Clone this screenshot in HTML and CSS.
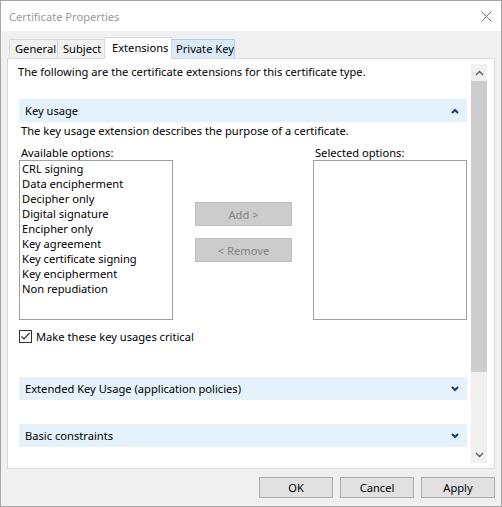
FILE: index.html
```html
<!DOCTYPE html>
<html>
<head>
    <title>Certificate Properties</title>
    <link rel="stylesheet" href="styles.css">
</head>
<body>
<div class="dialog">
    <div class="titlebar">
        <span class="title">Certificate Properties</span>
        <svg class="close" width="11" height="11" viewBox="0 0 11 11">
            <path d="M0.5 0.5 L10.5 10.5 M10.5 0.5 L0.5 10.5" stroke="#7a7a7a" stroke-width="1" fill="none"/>
        </svg>
    </div>

    <div class="tabs">
        <div class="tab tab-general">General</div>
        <div class="tab tab-subject">Subject</div>
        <div class="tab tab-active">Extensions</div>
        <div class="tab tab-hover">Private Key</div>
    </div>

    <div class="panel">
        <div class="content">
            <div class="intro">The following are the certificate extensions for this certificate type.</div>

            <div class="section-head first">
                <span>Key usage</span>
                <svg class="chevron" width="8" height="6" viewBox="0 0 8 6">
                    <polyline points="1,5 4,2 7,5" fill="none" stroke="#1c3a8c" stroke-width="2"/>
                </svg>
            </div>
            <div class="desc">The key usage extension describes the purpose of a certificate.</div>

            <div class="options">
                <div class="option-col">
                    <div class="option-label">Available options:</div>
                    <ul class="listbox">
                        <li>CRL signing</li>
                        <li>Data encipherment</li>
                        <li>Decipher only</li>
                        <li>Digital signature</li>
                        <li>Encipher only</li>
                        <li>Key agreement</li>
                        <li>Key certificate signing</li>
                        <li>Key encipherment</li>
                        <li>Non repudiation</li>
                    </ul>
                </div>
                <div class="move-buttons">
                    <button class="move-btn" disabled>Add &gt;</button>
                    <button class="move-btn" disabled>&lt; Remove</button>
                </div>
                <div class="option-col">
                    <div class="option-label">Selected options:</div>
                    <ul class="listbox"></ul>
                </div>
            </div>

            <label class="critical">
                <svg class="checkbox" width="13" height="13" viewBox="0 0 13 13">
                    <rect x="0.5" y="0.5" width="12" height="12" fill="#fff" stroke="#333"/>
                    <polyline points="2.5,6.5 5,9 10.5,3" fill="none" stroke="#333" stroke-width="1.2"/>
                </svg>
                <span>Make these key usages critical</span>
            </label>

            <div class="section-head eku">
                <span>Extended Key Usage (application policies)</span>
                <svg class="chevron" width="8" height="6" viewBox="0 0 8 6">
                    <polyline points="1,1 4,4 7,1" fill="none" stroke="#1c3a8c" stroke-width="2"/>
                </svg>
            </div>

            <div class="section-head basic">
                <span>Basic constraints</span>
                <svg class="chevron" width="8" height="6" viewBox="0 0 8 6">
                    <polyline points="1,1 4,4 7,1" fill="none" stroke="#1c3a8c" stroke-width="2"/>
                </svg>
            </div>
        </div>

        <div class="scrollbar">
            <div class="sb-arrow">
                <svg width="9" height="6" viewBox="0 0 9 6">
                    <polyline points="1,5 4.5,1.5 8,5" fill="none" stroke="#606060" stroke-width="1.4"/>
                </svg>
            </div>
            <div class="sb-thumb"></div>
            <div class="sb-track"></div>
            <div class="sb-arrow">
                <svg width="9" height="6" viewBox="0 0 9 6">
                    <polyline points="1,1 4.5,4.5 8,1" fill="none" stroke="#606060" stroke-width="1.4"/>
                </svg>
            </div>
        </div>
    </div>

    <div class="footer">
        <button class="btn">OK</button>
        <button class="btn">Cancel</button>
        <button class="btn">Apply</button>
    </div>
</div>
</body>
</html>
```

FILE: styles.css
```css
body { margin: 0; font-family: "Noto Sans", sans-serif; font-size: 11.15px; color: #000; }
button { font: inherit; }

.dialog { width: 502px; height: 507px; box-sizing: border-box; border: 1px solid #a6a6a6; background: #f0f0f0; display: flex; flex-direction: column; }

/* title bar */
.titlebar { height: 30px; flex: none; background: #fff; display: flex; align-items: center; justify-content: space-between; padding: 0 9px 0 8px; }
.title { color: #999; }
.close { margin-top: 1px; }

/* tab strip */
.tabs { display: flex; align-items: flex-end; height: 21px; margin: 6px 0 0 8px; flex: none; }
.tab { box-sizing: border-box; height: 19px; border: 1px solid #d9d9d9; border-bottom: none; padding-left: 5px; line-height: 18px; white-space: nowrap; }
.tab + .tab { margin-left: -1px; }
.tab-general { width: 49px; }
.tab-subject { width: 48px; }
.tab-active { width: 68px; height: 22px; margin-bottom: -1px; background: #fff; position: relative; z-index: 1; padding-left: 7px; line-height: 19px; }
.tab-hover { width: 64px; background: #d9eaf9; border-color: #b5cee6; padding-left: 4px; }

/* tab page */
.panel { margin-left: 6px; width: 488px; height: 411px; flex: none; box-sizing: border-box; border: 1px solid #d9d9d9; background: #fff; padding: 5px 7px 5px 0; display: flex; }
.content { flex: 1; overflow: hidden; padding: 0 4px 0 11px; }

.intro { line-height: 15px; margin-left: -1px; }
.section-head { height: 23px; background: #e5f1fb; display: flex; align-items: center; justify-content: space-between; padding: 0 8px 0 6px; }
.section-head.first { margin-top: 20px; }
.section-head.eku { margin-top: 33px; }
.section-head.basic { margin-top: 24px; }
.desc { margin-top: 1px; line-height: 15px; padding-left: 2px; }

.options { display: flex; margin-top: 7px; }
.option-col { width: 154px; }
.option-label { line-height: 15px; padding-left: 2px; }
.listbox { list-style: none; margin: 0; height: 160px; box-sizing: border-box; border: 1px solid #a0a0a0; padding: 0 2px; }
.listbox li { line-height: 15px; }

.move-buttons { display: flex; flex-direction: column; gap: 12px; margin: 0 21px 0 22px; padding-top: 57px; }
.move-btn { width: 97px; height: 24px; box-sizing: border-box; border: 1px solid #bfbfbf; background: #ccc; color: #838383; padding: 0; }

.critical { display: flex; align-items: center; gap: 4px; margin-top: 9px; line-height: 15px; }
.checkbox { display: block; }

/* scrollbar */
.scrollbar { width: 16px; flex: none; display: flex; flex-direction: column; background: #f0f0f0; }
.sb-arrow { height: 17px; display: flex; align-items: center; justify-content: center; }
.sb-thumb { height: 291px; background: #cdcdcd; }
.sb-track { flex: 1; }

/* dialog buttons */
.footer { display: flex; justify-content: flex-end; gap: 7px; padding: 8px 6px 0 0; }
.btn { width: 74px; height: 21px; box-sizing: border-box; border: 1px solid #adadad; background: #e1e1e1; color: #000; padding: 0; }
```
